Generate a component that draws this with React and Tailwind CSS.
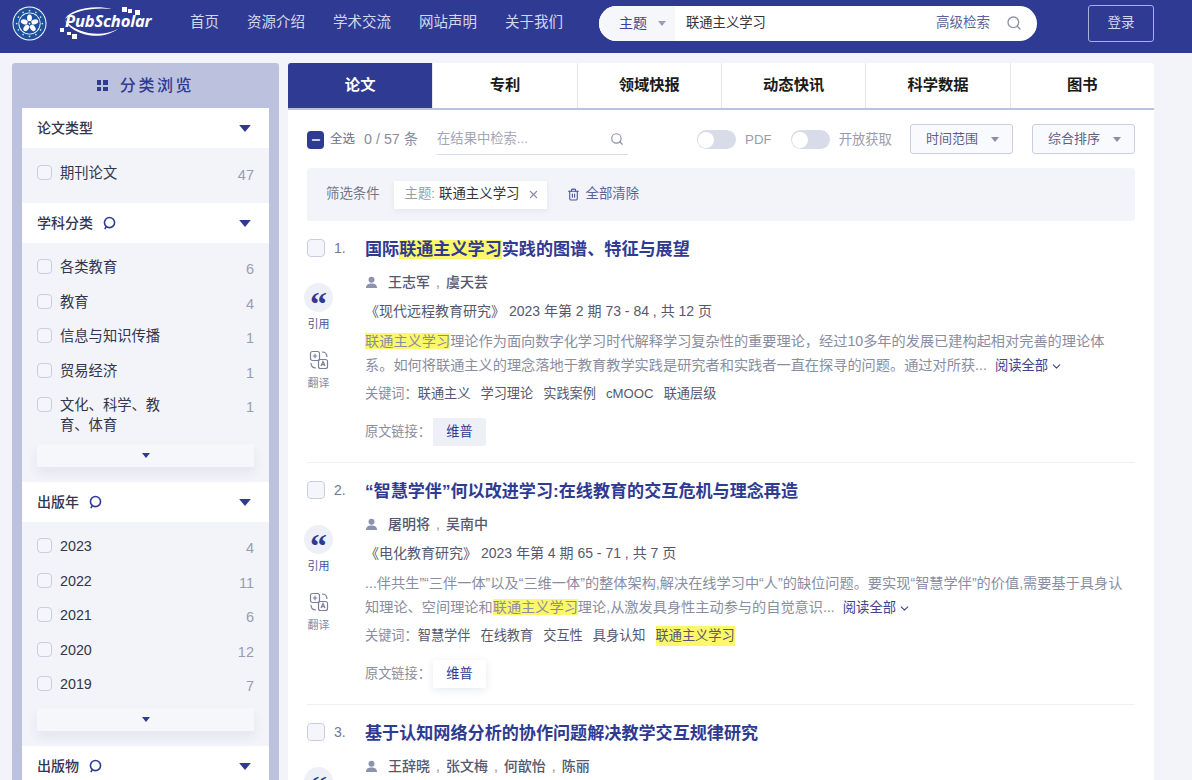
import { ChevronDown, Search, Trash2, X, Minus } from "lucide-react";

const navItems = ["首页", "资源介绍", "学术交流", "网站声明", "关于我们"];
const tabs = ["论文", "专利", "领域快报", "动态快讯", "科学数据", "图书"];

function Mark({ children }) {
  return <span className="bg-[#fdf76a]">{children}</span>;
}

function Caret({ className = "" }) {
  return (
    <svg viewBox="0 0 10 6" className={className} fill="currentColor">
      <path d="M0 0h10L5 6z" />
    </svg>
  );
}

function Box({ className = "" }) {
  return (
    <span
      className={`block shrink-0 rounded-[4px] border border-[#c9cde3] bg-[#f5f6fb] ${className}`}
    />
  );
}

function Emblem() {
  const petals = [0, 72, 144, 216, 288];
  const dots = [0, 30, 60, 90, 120, 150, 180, 210, 240, 270, 300, 330];
  return (
    <svg viewBox="0 0 36 36" className="h-[35px] w-[35px] shrink-0">
      <circle cx="18" cy="18" r="17.5" fill="#fff" />
      <circle cx="18" cy="18" r="16.5" fill="#1c4f9e" />
      {dots.map((a) => (
        <circle key={a} cx="18" cy="4.8" r="0.9" fill="#cfe0f2" transform={`rotate(${a} 18 18)`} />
      ))}
      <circle cx="18" cy="18" r="11.4" fill="#fff" />
      <circle cx="18" cy="18" r="10.6" fill="#1c4f9e" />
      {petals.map((a) => (
        <ellipse
          key={a}
          cx="18"
          cy="12.4"
          rx="2.5"
          ry="3.7"
          fill="#fff"
          transform={`rotate(${a} 18 18)`}
        />
      ))}
      <circle cx="18" cy="18" r="2.2" fill="#1c4f9e" />
      <circle cx="18" cy="18" r="0.9" fill="#fff" />
    </svg>
  );
}

function Logo() {
  return (
    <div className="relative ml-[13px] h-[36px] w-[94px] shrink-0">
      <svg viewBox="0 0 94 36" className="absolute inset-0 h-full w-full">
        <path d="M5 15C10 28 38 38 58 24C42 33 16 29 5 15Z" fill="#fff" />
        <path d="M5 14C9 6 30 -1 52 4C32 2 14 6 5 14Z" fill="#fff" />
        <g fill="#fff">
          <rect x="0" y="23" width="4" height="4" />
          <rect x="7" y="27" width="4" height="3" />
          <rect x="12" y="29" width="5" height="5" />
          <rect x="62" y="2" width="5" height="5" />
          <rect x="68" y="4" width="4" height="4" />
          <rect x="75" y="5" width="5" height="5" />
        </g>
      </svg>
      <span className="absolute left-[5px] top-[1px] font-['Open_Sans',sans-serif] text-[16.6px] font-bold italic leading-[30px] tracking-[-0.2px] text-white">
        PubScholar
      </span>
    </div>
  );
}

function Header() {
  return (
    <header className="flex h-[53px] shrink-0 items-center bg-[#2f3a92] pb-[7px] pl-[12px] pr-[38px]">
      <Emblem />
      <Logo />
      <nav className="ml-[36px] flex gap-[28px] text-[14.5px] text-[#d5d8ec]">
        {navItems.map((n) => (
          <span key={n}>{n}</span>
        ))}
      </nav>
      <div className="ml-[36px] flex h-[35px] w-[438px] items-center overflow-hidden rounded-full bg-white text-[13.3px]">
        <div className="flex h-full w-[76px] items-center bg-[#f6f7fb] pl-[20px] text-[14px] text-[#3a438f]">
          主题
          <Caret className="ml-[11px] h-[5px] w-[8px] text-[#9a9eb8]" />
        </div>
        <div className="flex-1 pl-[11px] text-[#333]">联通主义学习</div>
        <span className="text-[13.5px] text-[#5c6399]">高级检索</span>
        <Search className="ml-[16px] mr-[15px] h-[16px] w-[16px] text-[#8b8fa8]" />
      </div>
      <button className="ml-auto flex h-[37px] w-[66px] items-center justify-center rounded-[3px] border border-[#aab0d8] text-[13.5px] text-[#d5d8ec]">
        登录
      </button>
    </header>
  );
}

function SectionHead({ title, search }) {
  return (
    <div className="flex h-[40px] items-center bg-white pl-[15px] pr-[18px] text-[14px] font-medium text-[#33364d]">
      <span>{title}</span>
      {search && (
        <svg
          viewBox="0 0 16 16"
          className="ml-[9px] h-[15px] w-[15px] text-[#2f3a92]"
          fill="none"
          stroke="currentColor"
          strokeWidth="1.7"
        >
          <circle cx="8" cy="7" r="5.4" />
          <path d="M4.6 11.4L3 14" />
        </svg>
      )}
      <Caret className="ml-auto h-[7px] w-[12px] text-[#2f3a92]" />
    </div>
  );
}

function FacetRow({ label, count }) {
  return (
    <div className="flex items-start text-[14.3px] leading-[20px] text-[#33364d]">
      <Box className="mt-[2px] h-[15px] w-[15px]" />
      <span className="ml-[8px] w-[105px]">{label}</span>
      <span className="ml-auto h-[20px] text-[14.5px] leading-[24px] text-[#9a9cae]">{count}</span>
    </div>
  );
}

function MoreBar({ className = "" }) {
  return (
    <div
      className={`flex h-[23px] items-center justify-center bg-[#f6f7fb] shadow-[0_6px_12px_rgba(60,70,140,0.08)] ${className}`}
    >
      <Caret className="h-[5px] w-[8px] text-[#2f3a92]" />
    </div>
  );
}

function Sidebar() {
  const subjects = [
    ["各类教育", 6],
    ["教育", 4],
    ["信息与知识传播", 1],
    ["贸易经济", 1],
    ["文化、科学、教育、体育", 1],
  ];
  const years = [
    ["2023", 4],
    ["2022", 11],
    ["2021", 6],
    ["2020", 12],
    ["2019", 7],
  ];
  return (
    <aside className="w-[267px] shrink-0 rounded-t-[3px] bg-[#bcc2de] px-[10px]">
      <div className="flex h-[45px] items-center justify-center text-[16px] font-medium tracking-[2.6px] text-[#2f3a92]">
        <span className="mr-[12px] grid h-[11px] w-[11px] grid-cols-2 gap-[2px]">
          <i className="bg-[#2f3a92]" />
          <i className="bg-[#2f3a92]" />
          <i className="bg-[#2f3a92]" />
          <i className="bg-[#2f3a92]" />
        </span>
        分类浏览
      </div>
      <div className="bg-[#f2f4f9]">
        <SectionHead title="论文类型" />
        <div className="h-[55px] px-[15px] pt-[15px]">
          <FacetRow label="期刊论文" count={47} />
        </div>
        <SectionHead title="学科分类" search />
        <div className="px-[15px] pb-[15px] pt-[14px]">
          <div className="flex flex-col gap-[14.5px]">
            {subjects.map(([l, c]) => (
              <FacetRow key={l} label={l} count={c} />
            ))}
          </div>
          <MoreBar className="mt-[9px]" />
        </div>
        <SectionHead title="出版年" search />
        <div className="px-[15px] pb-[15px] pt-[14px]">
          <div className="flex flex-col gap-[14.5px]">
            {years.map(([l, c]) => (
              <FacetRow key={l} label={l} count={c} />
            ))}
          </div>
          <MoreBar className="mt-[14px]" />
        </div>
        <SectionHead title="出版物" search />
      </div>
    </aside>
  );
}

function Toggle({ label }) {
  return (
    <div className="flex items-center gap-[9px] text-[13.3px] text-[#9a9cae]">
      <span className="flex h-[19px] w-[39px] items-center rounded-full bg-[#d8dbe8] pl-[1px]">
        <span className="h-[16px] w-[16px] rounded-full bg-white" />
      </span>
      {label}
    </div>
  );
}

function SelectBox({ label }) {
  return (
    <div className="flex h-[30px] w-[103px] items-center rounded-[3px] border border-[#c9cde0] bg-[#f9fafd] pl-[15px] text-[13px] text-[#5a5f85]">
      {label}
      <Caret className="ml-[13px] h-[5px] w-[8px] text-[#8a8ea8]" />
    </div>
  );
}

function Toolbar() {
  return (
    <div className="flex h-[31px] items-center">
      <span className="flex h-[18px] w-[17px] items-center justify-center rounded-[4px] bg-[#2f3a92]">
        <Minus className="h-[12px] w-[12px] text-white" strokeWidth={3} />
      </span>
      <span className="ml-[6px] text-[12.5px] text-[#6b6e85]">全选</span>
      <span className="ml-[9px] text-[14.3px] text-[#8a8da0]">0 / 57 条</span>
      <div className="ml-[19px] flex h-[31px] w-[191px] items-center border-b border-[#d8dbe8] text-[13.3px] text-[#a3a6b8]">
        在结果中检索...
        <Search className="ml-auto mr-[4px] h-[14px] w-[14px] text-[#8b8fa8]" />
      </div>
      <div className="ml-[69px] flex items-center gap-[19px]">
        <Toggle label="PDF" />
        <Toggle label="开放获取" />
      </div>
      <div className="ml-auto flex gap-[19px] self-start">
        <SelectBox label="时间范围" />
        <SelectBox label="综合排序" />
      </div>
    </div>
  );
}

function FilterBar() {
  return (
    <div className="mt-[13px] flex h-[53px] items-center rounded-[3px] bg-[#f2f4f9] pl-[19px] text-[13.4px]">
      <span className="text-[#73768c]">筛选条件</span>
      <div className="ml-[14px] flex h-[28px] w-[153px] items-center bg-white pl-[11px] shadow-[0_2px_6px_rgba(60,70,140,0.08)]">
        <span className="text-[#9a9cae]">主题:</span>
        <span className="ml-[4px] text-[#333]">联通主义学习</span>
        <X className="ml-[8px] h-[13px] w-[13px] text-[#8a8da0]" />
      </div>
      <Trash2 className="ml-[20px] h-[13px] w-[13px] text-[#4a5297]" />
      <span className="ml-[6px] text-[#5c6399]">全部清除</span>
    </div>
  );
}

function TranslateIcon() {
  return (
    <svg
      viewBox="0 0 20 20"
      className="h-[20px] w-[20px] text-[#7b7f9c]"
      fill="none"
      stroke="currentColor"
      strokeWidth="1.2"
    >
      <rect x="1.5" y="1.5" width="9" height="9" rx="2" />
      <path d="M3.8 6h4.4M6 3.8v4.4" />
      <rect x="9.5" y="9.5" width="9" height="9" rx="2" />
      <path d="M12 16l2-4.5 2 4.5M12.8 14.6h2.4" />
      <path d="M13 2c3 0 5 2 5 5M2 13c0 3 2 5 5 5" />
    </svg>
  );
}

function Article({ index, title, authors, journal, abstract, keywords, linkShadow }) {
  return (
    <article className="flex border-b border-[#eef0f6] pb-[16px] last:border-0">
      <div className="flex w-[58px] shrink-0 flex-col">
        <div className="flex h-[20px] items-start">
          <Box className="h-[18px] w-[18px]" />
          <span className="ml-[9px] text-[14px] leading-[18px] text-[#73768c]">{index}.</span>
        </div>
        <div className="ml-[-3px] mt-[24px] flex w-[29px] flex-col items-center">
          <span className="flex h-[29px] w-[29px] items-center justify-center rounded-full bg-[#eef0f8] font-['Liberation_Serif',serif] text-[34px] font-bold leading-none text-[#2f3a92]">
            <span className="mt-[13px]">“</span>
          </span>
          <span className="mt-[4px] text-[11px] leading-[16px] text-[#4a5297]">引用</span>
          <span className="mt-[18px]">
            <TranslateIcon />
          </span>
          <span className="mt-[5px] text-[11px] leading-[16px] text-[#8a8da0]">翻译</span>
        </div>
      </div>
      <div className="min-w-0 flex-1">
        <h2 className="mt-[1px] h-[20px] text-[17.1px] font-bold leading-[20px] text-[#2f3a92]">{title}</h2>
        <div className="mt-[12px] flex h-[20px] items-center text-[14px] font-medium text-[#55586e]">
          <svg viewBox="0 0 14 14" className="mr-[10px] h-[13px] w-[13px]" fill="#8d92ae">
            <circle cx="7" cy="4" r="3.2" />
            <path d="M1 13c0-3.5 2.5-5 6-5s6 1.500 6 5z" />
          </svg>
          {authors.map((a, i) => (
            <span key={a}>
              {i > 0 && <span className="mx-[6px] font-normal text-[#8a8da0]">,</span>}
              {a}
            </span>
          ))}
        </div>
        <div className="mt-[9px] h-[20px] text-[14px] leading-[20px] text-[#55586e]">{journal}</div>
        <p className="mt-[8px] w-[762px] text-[14.2px] leading-[24px] text-[#8a8da0]">{abstract}</p>
        <div className="mt-[6px] flex h-[20px] items-center text-[13.2px] text-[#8a8da0]">
          关键词：
          <span className="flex gap-[10px] text-[#55586e]">{keywords}</span>
        </div>
        <div className="mt-[14px] flex h-[28px] items-center text-[13.2px] text-[#8a8da0]">
          原文链接：
          <span
            className={`ml-[2px] flex h-[28px] w-[53px] items-center justify-center text-[#2f3a92] ${
              linkShadow ? "bg-white shadow-[0_2px_8px_rgba(60,70,140,0.12)]" : "bg-[#eef0f8]"
            }`}
          >
            维普
          </span>
        </div>
      </div>
    </article>
  );
}

function ReadAll() {
  return (
    <span className="ml-[8px] inline-flex items-center text-[13.3px] text-[#3a438f]">
      阅读全部
      <ChevronDown className="ml-[2px] h-[13px] w-[13px]" />
    </span>
  );
}

export default function App() {
  return (
    <div className="flex h-[780px] flex-col overflow-hidden bg-[#f2f4f9] font-['Liberation_Sans','Noto_Sans_CJK_SC',sans-serif]">
      <Header />
      <div className="flex min-h-0 flex-1 gap-[9px] pl-[12px] pr-[38px] pt-[10px]">
        <Sidebar />
        <main className="min-w-0 flex-1 rounded-t-[3px] bg-white">
          <div className="grid h-[47px] grid-cols-6 border-b-2 border-[#bcc2de] text-[15.3px] font-bold text-[#1a1a1a]">
            {tabs.map((t, i) => (
              <div
                key={t}
                className={`flex items-center justify-center ${
                  i === 0
                    ? "rounded-tl-[3px] bg-[#2f3a92] text-white"
                    : "border-l border-[#e6e8f0]"
                }`}
              >
                {t}
              </div>
            ))}
          </div>
          <div className="px-[19px] pt-[14px]">
            <Toolbar />
            <FilterBar />
            <div className="mt-[18px] flex flex-col gap-[18px]">
              <Article
                index={1}
                title={
                  <>
                    国际<Mark>联通主义学习</Mark>实践的图谱、特征与展望
                  </>
                }
                authors={["王志军", "虞天芸"]}
                journal="《现代远程教育研究》 2023 年第 2 期 73 - 84 , 共 12 页"
                abstract={
                  <>
                    <Mark>联通主义学习</Mark>
                    理论作为面向数字化学习时代解释学习复杂性的重要理论，经过10多年的发展已建构起相对完善的理论体系。如何将联通主义的理念落地于教育教学实践是研究者和实践者一直在探寻的问题。通过对所获...
                    <ReadAll />
                  </>
                }
                keywords={
                  <>
                    <span>联通主义</span>
                    <span>学习理论</span>
                    <span>实践案例</span>
                    <span>cMOOC</span>
                    <span>联通层级</span>
                  </>
                }
              />
              <Article
                index={2}
                linkShadow
                title="“智慧学伴”何以改进学习:在线教育的交互危机与理念再造"
                authors={["屠明将", "吴南中"]}
                journal="《电化教育研究》 2023 年第 4 期 65 - 71 , 共 7 页"
                abstract={
                  <>
                    ...伴共生”“三伴一体”以及“三维一体”的整体架构,解决在线学习中“人”的缺位问题。要实现“智慧学伴”的价值,需要基于具身认知理论、空间理论和
                    <Mark>联通主义学习</Mark>
                    理论,从激发具身性主动参与的自觉意识...
                    <ReadAll />
                  </>
                }
                keywords={
                  <>
                    <span>智慧学伴</span>
                    <span>在线教育</span>
                    <span>交互性</span>
                    <span>具身认知</span>
                    <Mark>联通主义学习</Mark>
                  </>
                }
              />
              <Article
                index={3}
                title="基于认知网络分析的协作问题解决教学交互规律研究"
                authors={["王辞晓", "张文梅", "何歆怡", "陈丽"]}
                journal=""
                abstract=""
                keywords=""
              />
            </div>
          </div>
        </main>
      </div>
    </div>
  );
}
